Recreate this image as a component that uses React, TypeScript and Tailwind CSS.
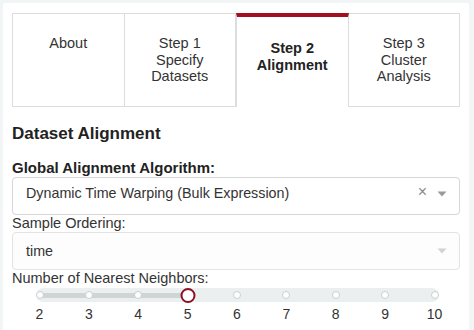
import React from 'react'

const tabs = [
  { key: 'about', lines: ['About'] },
  { key: 'step1', lines: ['Step 1', 'Specify', 'Datasets'] },
  { key: 'step2', lines: ['Step 2', 'Alignment'], active: true },
  { key: 'step3', lines: ['Step 3', 'Cluster', 'Analysis'] },
]

const neighbors = [2, 3, 4, 5, 6, 7, 8, 9, 10]
const selected = 5

function Caret({ className }: { className: string }) {
  return (
    <svg width="10" height="6" viewBox="0 0 10 6" className={className}>
      <path d="M0.5 0.5 L9.5 0.5 L5 5.5 Z" fill="currentColor" />
    </svg>
  )
}

function Tabs() {
  return (
    <div className="flex h-[94px]">
      {tabs.map((t, i) => (
        <div
          key={t.key}
          className={
            t.active
              ? 'flex-1 border-x border-t-4 border-x-[#dddddd] border-t-[#a3101f] bg-white pt-[23px] text-center font-bold text-[#222]'
              : `flex-1 border-y border-r border-[#dddddd] pt-[21px] text-center text-[#333] ${i === 0 ? 'border-l' : ''}`
          }
        >
          {t.lines.map((l) => (
            <div key={l} className="text-[14.5px] leading-[16.5px]">
              {l}
            </div>
          ))}
        </div>
      ))}
    </div>
  )
}

function NeighborSlider() {
  const selIdx = neighbors.indexOf(selected)
  const step = 100 / (neighbors.length - 1)
  return (
    <div className="ml-[27.5px] w-[395px]">
      <div className="relative h-[16px]">
        <div className="absolute -left-[4px] -right-[4px] top-[1px] h-[14px] rounded-full bg-[#eceff0]" />
        <div
          className="absolute top-[5.5px] h-[5px] rounded-full bg-[#cfd4d5]"
          style={{ left: 0, width: `${selIdx * step}%` }}
        />
        {neighbors.map((n, i) =>
          n === selected ? (
            <div
              key={n}
              className="absolute top-[0.5px] h-[15px] w-[15px] -translate-x-1/2 rounded-full border-[2.5px] border-[#8c1020] bg-white"
              style={{ left: `${i * step}%` }}
            />
          ) : (
            <div
              key={n}
              className="absolute top-[4px] h-[8px] w-[8px] -translate-x-1/2 rounded-full border border-[#c9cfd0] bg-white"
              style={{ left: `${i * step}%` }}
            />
          ),
        )}
      </div>
      <div className="relative mt-[2.5px] h-[17px]">
        {neighbors.map((n, i) => (
          <span
            key={n}
            className="absolute -translate-x-1/2 text-[14px] leading-[17px] text-[#333]"
            style={{ left: `${i * step}%` }}
          >
            {n}
          </span>
        ))}
      </div>
    </div>
  )
}

export default function App() {
  return (
    <div
      className="h-[330px] w-[474px] overflow-hidden bg-[#f1f5f5] pl-[3px] pr-[5px] pt-[3px]"
      style={{ fontFamily: '"Liberation Sans", Arial, sans-serif' }}
    >
      <div className="h-full bg-white pl-[9px] pr-[9px] pt-[10px]">
        <Tabs />

        <h3 className="mt-[17px] text-[17px] font-bold leading-[20px] text-[#222]">Dataset Alignment</h3>

        <div className="mt-[15px] text-[15px] font-bold leading-[18px] text-[#222]">Global Alignment Algorithm:</div>
        <div className="flex h-[38px] items-start rounded-[4px] border border-[#d6d6d6] bg-white pl-[13px] pr-[12px] pt-[5px]">
          <span className="flex-1 text-[14.3px] leading-[20px] text-[#333]">Dynamic Time Warping (Bulk Expression)</span>
          <span className="mt-[-1px] mr-[10px] text-[16px] leading-[20px] text-[#8a8a8a]">×</span>
          <Caret className="mt-[8px] text-[#9a9a9a]" />
        </div>

        <div className="text-[14.5px] leading-[17px] text-[#333]">Sample Ordering:</div>
        <div className="flex h-[38px] items-center rounded-[4px] border border-[#e3e3e3] bg-[#fdfdfd] pl-[13px] pr-[12px]">
          <span className="flex-1 text-[14.3px] leading-[20px] text-[#333]">time</span>
          <Caret className="text-[#d2d2d2]" />
        </div>

        <div className="text-[14.5px] leading-[17px] text-[#333]">Number of Nearest Neighbors:</div>
        <NeighborSlider />
      </div>
    </div>
  )
}
